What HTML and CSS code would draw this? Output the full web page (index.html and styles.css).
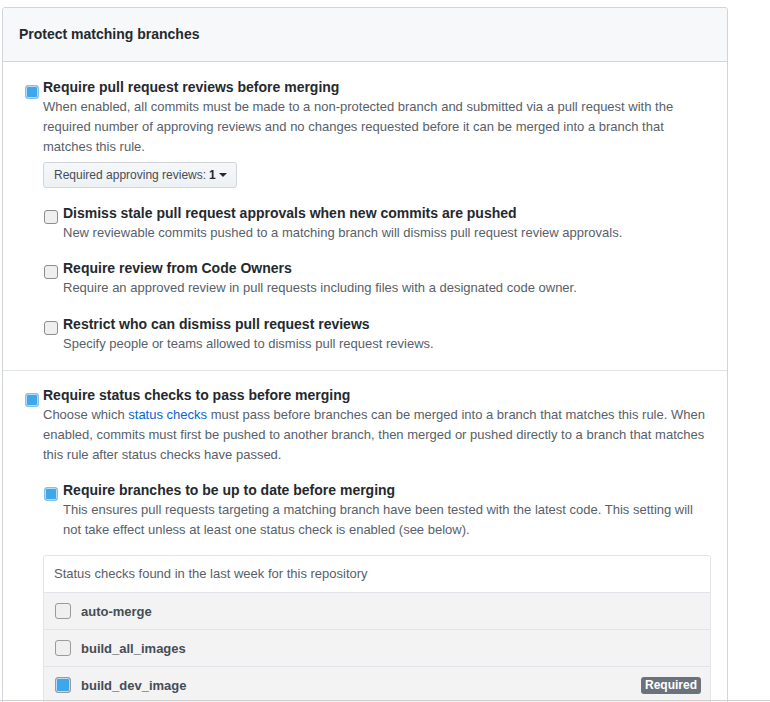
FILE: index.html
```html
<!DOCTYPE html>
<html>
<head>
<meta charset="utf-8">
<link rel="stylesheet" href="styles.css">
</head>
<body>
<div class="box">
  <div class="box-header">Protect matching branches</div>

  <div class="section">
    <div class="item">
      <span class="cb checked"></span>
      <div>
        <div class="title">Require pull request reviews before merging</div>
        <div class="desc">When enabled, all commits must be made to a non-protected branch and submitted via a pull request with the required number of approving reviews and no changes requested before it can be merged into a branch that matches this rule.</div>
        <div class="select">Required approving reviews: <b>1</b><span class="caret"></span></div>

        <div class="item nested">
          <span class="cb"></span>
          <div>
            <div class="title">Dismiss stale pull request approvals when new commits are pushed</div>
            <div class="desc">New reviewable commits pushed to a matching branch will dismiss pull request review approvals.</div>
          </div>
        </div>
        <div class="item nested">
          <span class="cb"></span>
          <div>
            <div class="title">Require review from Code Owners</div>
            <div class="desc">Require an approved review in pull requests including files with a designated code owner.</div>
          </div>
        </div>
        <div class="item nested wide-gap">
          <span class="cb"></span>
          <div>
            <div class="title">Restrict who can dismiss pull request reviews</div>
            <div class="desc">Specify people or teams allowed to dismiss pull request reviews.</div>
          </div>
        </div>
      </div>
    </div>
  </div>

  <div class="section second">
    <div class="item">
      <span class="cb checked"></span>
      <div>
        <div class="title">Require status checks to pass before merging</div>
        <div class="desc">Choose which <a href="#">status checks</a> must pass before branches can be merged into a branch that matches this rule. When enabled, commits must first be pushed to another branch, then merged or pushed directly to a branch that matches this rule after status checks have passed.</div>

        <div class="item nested">
          <span class="cb checked"></span>
          <div>
            <div class="title">Require branches to be up to date before merging</div>
            <div class="desc">This ensures pull requests targeting a matching branch have been tested with the latest code. This setting will not take effect unless at least one status check is enabled (see below).</div>
          </div>
        </div>

        <div class="checks">
          <div class="checks-header">Status checks found in the last week for this repository</div>
          <div class="check-row"><span class="cb big"></span><span class="check-name">auto-merge</span></div>
          <div class="check-row"><span class="cb big"></span><span class="check-name">build_all_images</span></div>
          <div class="check-row"><span class="cb big checked"></span><span class="check-name">build_dev_image</span><span class="badge">Required</span></div>
        </div>
      </div>
    </div>
  </div>
</div>
<div class="edge"></div>
</body>
</html>
```
FILE: styles.css
```css
html, body {
  margin: 0;
  padding: 0;
  background: #fff;
}
body {
  padding: 7px 0 0 2px;
  font-family: "Liberation Sans", Arial, sans-serif;
  font-size: 13px;
  color: #24292e;
  height: 702px;
  box-sizing: border-box;
  overflow: hidden;
}
.box {
  width: 726px;
  box-sizing: border-box;
  border: 1px solid #d1d5da;
  border-radius: 3px;
}
.box-header {
  background: #f6f8fa;
  border-bottom: 1px solid #d1d5da;
  padding: 16px 16px;
  font-size: 14px;
  font-weight: bold;
  line-height: 21px;
  border-radius: 3px 3px 0 0;
}
.section {
  padding: 15px 16px 16px 22px;
  border-bottom: 1px solid #e1e4e8;
}
.section.second {
  padding-top: 14px;
}
.item {
  display: grid;
  grid-template-columns: 18px 1fr;
}
.item.nested {
  grid-template-columns: 20px 1fr;
  margin-top: 15px;
}
.item.nested.wide-gap {
  margin-top: 16px;
}
.item.nested > .cb {
  margin-left: 1px;
  margin-top: 7px;
}
.title {
  font-size: 14px;
  font-weight: bold;
  line-height: 20px;
}
.desc {
  color: #586069;
  line-height: 20px;
}
.desc a {
  color: #0366d6;
  text-decoration: none;
}
.cb {
  display: block;
  box-sizing: border-box;
  width: 14px;
  height: 14px;
  margin-top: 8px;
  border: 1px solid #8d8d8d;
  border-radius: 3px;
  background: #efefef;
}
.cb.checked {
  border-color: #84bfea;
  background: #40a6ea;
  box-shadow: inset 0 0 0 1px #b9dcf5;
}
.cb.big {
  width: 16px;
  height: 16px;
  margin: 0;
  border-color: #9a9a9a;
  border-radius: 3px;
}
.select {
  display: inline-flex;
  align-items: center;
  margin-top: 5px;
  height: 26px;
  box-sizing: border-box;
  padding: 0 9px 0 10px;
  font-size: 12px;
  color: #444d56;
  background: linear-gradient(#f5f7f9, #eef1f4);
  border: 1px solid #d1d5da;
  border-radius: 3px;
}
.select b {
  color: #24292e;
  margin-left: 3px;
}
.caret {
  display: inline-block;
  width: 0;
  height: 0;
  margin-left: 3px;
  border-left: 4px solid transparent;
  border-right: 4px solid transparent;
  border-top: 4px solid #24292e;
}
.checks {
  margin-top: 15px;
  border: 1px solid #e1e4e8;
  border-radius: 3px;
}
.checks-header {
  padding: 8px 10px 8px;
  line-height: 20px;
  color: #586069;
}
.check-row {
  display: flex;
  align-items: center;
  height: 37px;
  box-sizing: border-box;
  border-top: 1px solid #e1e4e8;
  background: #f3f3f3;
  padding: 0 9px 0 11px;
}
.check-name {
  margin-left: 10px;
  font-weight: bold;
  color: #444d56;
}
.badge {
  margin-left: auto;
  background: #6a737d;
  color: #fff;
  font-size: 12px;
  font-weight: bold;
  line-height: 17px;
  padding: 0 4px;
  border-radius: 3px;
}
.edge {
  position: fixed;
  left: 0;
  right: 0;
  bottom: 1px;
  height: 1px;
  background: #cfcfcf;
}
```
